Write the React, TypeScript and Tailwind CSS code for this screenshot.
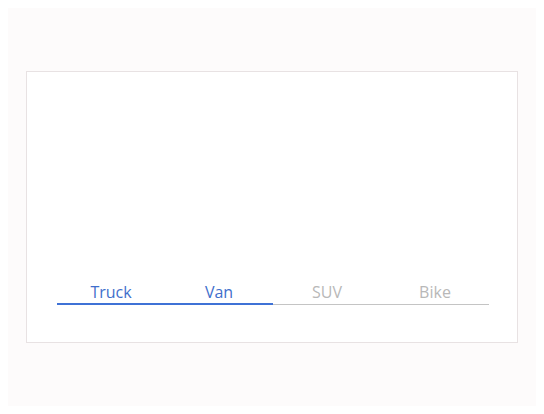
const TABS = ["Truck", "Van", "SUV", "Bike"];

export default function App() {
  const active = 1;

  return (
    <div className="p-2 bg-white" style={{ fontFamily: '"Open Sans", sans-serif' }}>
      <div className="h-[398px] bg-[#fdfbfb] px-[18px] pt-[63px]">
        <div className="w-[492px] h-[272px] bg-white border border-[#e8e2e3] flex flex-col justify-end pl-[30px] pr-[28px] pb-[37px]">
          <div className="relative flex border-b border-[#c4c4c4]">
            {TABS.map((t, i) => (
              <button
                key={t}
                className={`flex-1 h-[22px] pb-[1px] leading-[19px] text-[16px] ${i <= active ? "text-[#3f6fcc]" : "text-[#b8b8b8]"}`}
              >
                {t}
              </button>
            ))}
            <div className="absolute left-0 -bottom-px h-[2px] w-1/2 bg-[#3f72d6]" />
          </div>
        </div>
      </div>
    </div>
  );
}
